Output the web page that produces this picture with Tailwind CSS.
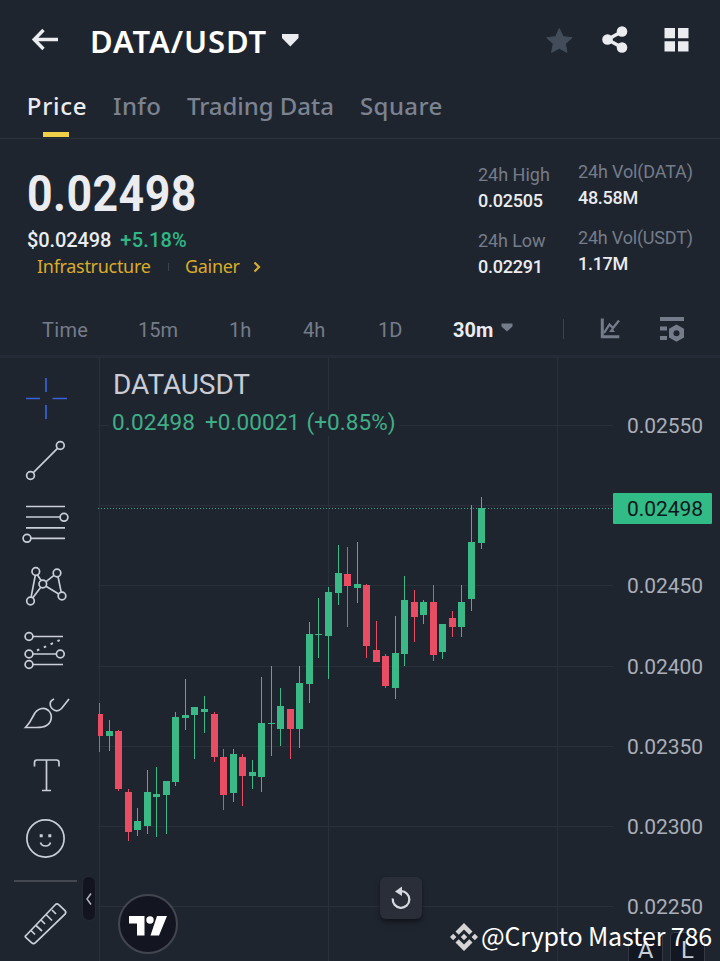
<!DOCTYPE html>
<html lang="en">

<head>
    <meta charset="UTF-8">
    <meta name="viewport" content="width=device-width, initial-scale=1.0">
    <title>DATA/USDT</title>
    <script src="https://cdn.jsdelivr.net/npm/@tailwindcss/browser@4"></script>
</head>

<body class="bg-[#1f252f] font-['Roboto',sans-serif]">
    <div class="relative flex flex-col w-[720px] h-[961px] overflow-hidden">
        <header class="flex items-center h-20 pl-[31px] pr-[30px]">
            <svg class="w-7 h-6" viewBox="31 28 28 24" fill="none" stroke="#eaecef" stroke-width="3.4">
                <path d="M58 39.500H34M43.500 30l-9.300 9.500 9.300 9.500" />
            </svg>
            <h1 class="ml-[31px] pt-[2px] w-[179px] text-[31px] leading-10 font-semibold tracking-[0.9px] text-white font-['Noto_Sans',sans-serif] whitespace-nowrap">DATA/USDT</h1>
            <svg class="ml-3 w-[18px] h-4" viewBox="281 32 18 16">
                <path d="M282 34h16.500v4l-8.200 8.500-8.300-8.500z" fill="#eaecef" />
            </svg>
            <div class="flex items-center gap-7 ml-auto">
                <svg class="w-7 h-7" viewBox="545 26 28 28">
                    <path d="M559.300 28.500l3.800 8.200 8.900 1-6.600 6.100 1.600 8.600-7.700-4.100-7.700 4.100 1.700-8.600-6.600-6.100 8.900-1z" fill="#434c5a" stroke="#434c5a" stroke-linejoin="round" />
                </svg>
                <svg class="w-7 h-7" viewBox="601 26 28 28" fill="#eaecef">
                    <path d="M622 31.500l-14.500 8 14.500 8" fill="none" stroke="#eaecef" stroke-width="3.500" />
                    <circle cx="622" cy="31.500" r="5.300" />
                    <circle cx="607.500" cy="39.500" r="5.300" />
                    <circle cx="622" cy="47.500" r="5.300" />
                </svg>
                <svg class="ml-[7px] w-[26px] h-7" viewBox="664 26 26 28" fill="#eaecef">
                    <path d="M664.500 28h10.500v10.300h-10.500zM678 28h10.500v10.300h-10.500zM664.500 41.300h10.500v10.300h-10.500zM678 41.300h10.500v10.300h-10.500z" />
                </svg>
            </div>
        </header>

        <nav class="flex h-[59px] pl-[27px] border-b border-[#2e343e] text-2xl leading-[52px] font-medium text-[#7b8290] font-['Noto_Sans',sans-serif] whitespace-nowrap">
            <div class="flex flex-col items-center w-[59px] mr-[27px] text-[#eaecef]">
                <span class="h-[52px] ml-px tracking-[0.7px]">Price</span>
                <span class="w-[26px] h-[5px] mr-[2px] bg-[#f0d048]"></span>
            </div>
            <span class="w-[74px] tracking-[0.4px]">Info</span>
            <span class="w-[173px] tracking-[-0.05px]">Trading Data</span>
            <span class="tracking-[0.4px]">Square</span>
        </nav>

        <section class="flex h-[162px] whitespace-nowrap">
            <div class="w-[451px] pl-[27px] pt-[24px]">
                <div class="text-[50px] leading-[62px] font-bold tracking-[0.5px] text-[#eaecef] origin-left scale-x-[0.893]">0.02498</div>
                <div class="flex gap-[9px] mt-0.5 text-xl leading-[26px] font-medium tracking-[-0.1px]">
                    <span class="text-[#eaecef]">$0.02498</span>
                    <span class="tracking-[0.2px] text-[#2fb785]">+5.18%</span>
                </div>
                <div class="flex items-center pl-2.5 text-lg leading-[27px] tracking-[-0.3px] text-[#d9ac2b] font-['Noto_Sans',sans-serif]">
                    <span class="w-[131px]">Infrastructure</span>
                    <span class="w-px h-2 mr-[16px] bg-[#3b424e]"></span>
                    <span class="w-[67px]">Gainer</span>
                    <svg class="w-[10px] h-3" viewBox="0 0 10 12" fill="none" stroke="#d9ac2b" stroke-width="2.200">
                        <path d="M2.500 1.500l4.500 4.500-4.500 4.500" />
                    </svg>
                </div>
            </div>
            <dl class="w-[73px] ml-[27px] pt-[23px] text-[#eaecef] text-lg leading-[26px] font-medium tracking-[-0.25px]">
                <dt class="text-[#757c89] font-normal tracking-normal">24h High</dt>
                <dd class="mb-[14px]">0.02505</dd>
                <dt class="text-[#757c89] font-normal tracking-[-0.1px]">24h Low</dt>
                <dd>0.02291</dd>
            </dl>
            <dl class="ml-[27px] pt-[20px] text-[#eaecef] text-lg leading-[26px] font-medium tracking-[-0.3px]">
                <dt class="text-[#757c89] font-normal tracking-[-0.15px]">24h Vol(DATA)</dt>
                <dd class="mb-[14px]">48.58M</dd>
                <dt class="text-[#757c89] font-normal tracking-[-0.2px]">24h Vol(USDT)</dt>
                <dd>1.17M</dd>
            </dl>
        </section>

        <div class="flex items-center h-[57px] pt-[3px] pl-[42px] border-b-[3px] border-[#262c37] text-xl text-[#757c89] whitespace-nowrap">
            <span class="w-[96px] tracking-[0.3px]">Time</span>
            <span class="w-[91px]">15m</span>
            <span class="w-[74px]">1h</span>
            <span class="w-[75px]">4h</span>
            <span class="w-[75px]">1D</span>
            <span class="w-[48px] text-[#eaecef] font-bold">30m</span>
            <svg class="w-3 h-[10px] mb-[3px]" viewBox="0 0 12 10"><path d="M0.500 0.500h11v3l-5.500 5-5.500-5z" fill="#757c89" /></svg>
            <span class="w-px h-5 ml-[50px] mb-[2px] bg-[#3b424e]"></span>
            <svg class="ml-[35px] mb-[2px] w-6 h-6" viewBox="599 317 24 24" fill="none" stroke="#757c89" stroke-width="3">
                <path d="M602.300 318.500v18.200h17" />
                <path d="M604 333l5.500-8.500 3.500 3.500 6-7.500" stroke-width="2.300" />
                <path d="M609 332l3-4 3 4z" fill="#757c89" stroke="none" />
            </svg>
            <svg class="ml-[36px] mb-[2px] w-[27px] h-[28px]" viewBox="659 315 27 28" fill="#757c89">
                <path d="M660 317h24v4h-24zM660 326.500h7v4h-7zM660 336h7v4h-7z" />
                <path d="M676.500 324.500l7.500 4.300v8.600l-7.500 4.300-7.500-4.300v-8.600z" />
                <circle cx="676.500" cy="333.300" r="3" fill="#1f252f" />
            </svg>
        </div>

        <main class="flex h-[603px]">
            <!-- drawing tools -->
            <aside class="relative w-[98px] pt-2 pl-[13px] shrink-0">
                <div class="flex flex-col w-16 [&>svg]:w-16 [&>svg]:h-[63px] [&>svg]:fill-none [&>svg]:stroke-[#c9ced8] [&>svg]:stroke-[1.700]">
                    <svg viewBox="13 366 64 63"><path d="M46 378v14M46 405v14M26 398.500h14M52.500 398.500h14.500" stroke="#3a62d6" /></svg>
                    <svg viewBox="13 429 64 63"><circle cx="30.500" cy="475.500" r="3.900" /><circle cx="60.300" cy="445.500" r="3.900" /><path d="M33.300 472.700l24.200-24.400" /></svg>
                    <svg viewBox="13 492 64 63"><path d="M26 506.500h39M26 517h34M26 527.800h39M31 538.300h34" /><circle cx="64" cy="517.300" r="3.900" /><circle cx="27" cy="538.300" r="3.900" /></svg>
                    <svg viewBox="13 555 64 63">
                        <circle cx="35.800" cy="571.500" r="3.800" /><circle cx="57" cy="573" r="3.800" /><circle cx="42.800" cy="584" r="3.800" /><circle cx="62" cy="596" r="3.800" /><circle cx="30.500" cy="601" r="3.800" />
                        <path d="M35.300 575.300l-4.200 21.800M37.500 575l3.600 5.500M46 581.700l8-6.300M58 576.700l3.200 15.500M46 586.200l12.700 7.800M40.800 587.300l-8 10.500" />
                    </svg>
                    <svg viewBox="13 618 64 63"><circle cx="29" cy="636.500" r="3.900" /><circle cx="29" cy="654" r="3.900" /><circle cx="60.300" cy="654" r="3.900" /><circle cx="29" cy="664.500" r="3.900" /><path d="M33 636.500h30M33 654h23.500M33 664.500h30" /><path d="M37 650.500l25-11.500" stroke-dasharray="2.500 5" stroke-width="2" /></svg>
                    <svg viewBox="13 681 64 63"><path d="M25.500 727.500c5-5 6.500-9 8.500-13 3-6 10-8 14.500-4 4.500 4.500 3.500 11.500-2 15-3 2-6 2-10 2zM54 699c-4.500 2-5 6-2 9.500 3 3 6.500 3 9.500 0l7.500-9.500" /></svg>
                    <svg viewBox="13 744 64 63"><path d="M34.500 766.500v-4q0-2.500 2.500-2.500h19.500q2.500 0 2.500 2.500v4M46.500 760v30.500M42 790.500h9" /></svg>
                    <svg viewBox="13 807 64 63"><circle cx="45.500" cy="838.500" r="18.600" /><path d="M40.500 842.500q1 3.500 5 3.500t5-3.500" /><path d="M39.700 835.800h3M48.300 835.800h3" stroke-width="3" /></svg>
                    <hr class="my-[10px] ml-px border-t-2 border-[#434851]">
                    <svg viewBox="13 892 64 63"><path d="M26 935.500l29-30.500q2-2 4 0l6 5.500q1.500 1.700 0 3.700l-29.500 28.500q-2 2-4 0l-5.500-5q-1.500-1.200 0-2.200zM31 930.500l4 4M36 925.500l6 5.500M41 920l4 4M46.500 915l5.500 5.500M52 910l4 4" /></svg>
                </div>
                <div class="absolute left-[82px] top-[518px] z-10 flex items-center justify-center w-[14px] h-[45px] rounded-[7px] bg-[#12151f] border border-[#242934]">
                    <svg class="w-2 h-3.5" viewBox="0 0 8 14" fill="none" stroke="#b2b5be" stroke-width="1.500"><path d="M6 1.500l-4 5.500 4 5.500" /></svg>
                </div>
            </aside>

            <svg id="chart" class="w-[622px] h-[603px] font-['Roboto',sans-serif]" viewBox="98 358 622 603">
                <path d="M99.500 358v603M328.500 358v603M557.500 358v603" stroke="#2a303a" />
                <path d="M98 425.500h515M98 505.500h515M98 585.500h515M98 666.500h515M98 746.500h515M98 826.500h515M98 906.500h515" stroke="#2a303a" />
                <rect x="109" y="410" width="290" height="26" fill="#1f252f" />
                <path d="M98 508.500h515" stroke="#3da585" stroke-dasharray="1 2" />
                <g id="candles"></g>
                <text x="113" y="394" font-size="28" fill="#c9ccd5" textLength="137">DATAUSDT</text>
                <g font-size="22.500" fill="#3fae87">
                    <text x="112" y="430" textLength="83">0.02498</text>
                    <text x="205" y="430" textLength="95">+0.00021</text>
                    <text x="306.500" y="430" textLength="89">(+0.85%)</text>
                </g>
                <rect x="613" y="493" width="99" height="31" rx="1" fill="#31bb86" />
                <g font-size="21" fill="#a9aeb8">
                    <text x="627" y="433" textLength="76">0.02550</text>
                    <text x="627" y="516" textLength="76" fill="#10151c">0.02498</text>
                    <text x="627" y="593" textLength="76">0.02450</text>
                    <text x="627" y="674" textLength="76">0.02400</text>
                    <text x="627" y="754" textLength="76">0.02350</text>
                    <text x="627" y="834" textLength="76">0.02300</text>
                    <text x="627" y="914" textLength="76">0.02250</text>
                </g>
            </svg>
        </main>

        <!-- chart overlays -->
        <div class="absolute left-[118px] top-[894px] flex items-center justify-center w-[60px] h-[60px] rounded-full bg-[#131620] border-2 border-[#43464f]">
            <svg class="w-[38px] h-5 mt-[3px]" viewBox="0 0 38 20" fill="#fff"><path d="M0 0h15.500v19.500H8V7.500H0zM28 0h10l-8 19.500h-8.500z" /><circle cx="21" cy="4" r="3.700" /></svg>
        </div>
        <div class="absolute left-[380px] top-[877px] flex items-center justify-center w-[42px] h-[42px] rounded-md bg-[#2a2e39] shadow-md shadow-black/40">
            <svg class="w-6 h-6" viewBox="389 886 24 24"><path d="M392.800 898.500a8.300 8.300 0 1 0 8.200-7.300h-3" fill="none" stroke="#d6d9e0" stroke-width="2.300" /><path d="M395 891.500l7-5v9.500z" fill="#d6d9e0" /></svg>
        </div>
        <div class="absolute left-[628px] top-[932px] flex gap-[7px] text-2xl leading-[34px] text-center text-[#c9ccd5]">
            <span class="w-[35px] h-10 rounded bg-[#131722] border border-[#343944]">A</span>
            <span class="w-[35px] h-10 rounded bg-[#131722] border border-[#343944]">L</span>
        </div>
        <div class="absolute left-[450px] top-[918px] flex items-center gap-[3px] text-white text-[25px] leading-[34px] tracking-[-0.12px] font-['Noto_Sans_CJK_SC',sans-serif] whitespace-nowrap">
            <svg class="mt-[4px] w-7 h-7" viewBox="0 0 28 28" fill="#d5d5d5">
                <path d="M14 0l8.500 8.500-3.200 3.200L14 6.400l-5.300 5.300-3.200-3.200zM14 28l8.500-8.500-3.200-3.200L14 21.600l-5.300-5.300-3.200 3.200zM3.200 10.800L6.400 14l-3.200 3.200L0 14zM24.800 10.800L28 14l-3.200 3.200-3.200-3.200zM14 10.800l3.200 3.200-3.200 3.200-3.200-3.200z" />
            </svg>
            <span>@Crypto Master 786</span>
        </div>
    </div>

    <script>
        // x, high, low, body top, body bottom, 1 = up
        const candles = [
            [99.5, 703, 752, 714, 736, 0], [109.5, 720, 751, 731, 736, 1], [118.5, 730, 791, 731, 789, 0],
            [128.5, 789, 841, 792, 832, 0], [137.5, 808, 836, 821, 830, 1], [147.5, 770, 834, 792, 826, 1],
            [156.5, 767, 837, 794, 797, 1], [166.5, 781, 834, 781, 795, 1], [175.5, 712, 786, 717, 782, 1],
            [185.5, 679, 730, 715, 718, 1], [194.5, 707, 759, 707, 715, 1], [204.5, 696, 733, 709, 712, 1],
            [214.5, 712, 762, 714, 757, 0], [223.5, 749, 810, 757, 795, 0], [233.5, 749, 802, 754, 793, 1],
            [242.5, 754, 806, 757, 776, 0], [252.5, 760, 789, 772, 776, 1], [261.5, 677, 792, 723, 777, 1],
            [271.5, 666, 756, 723, 724, 1], [280.5, 688, 746, 706, 729, 1], [290.5, 709, 759, 709, 729, 0],
            [299.5, 666, 748, 683, 729, 1], [309.5, 622, 703, 634, 684, 1], [318.5, 598, 658, 634, 635, 1],
            [328.5, 587, 679, 592, 636, 1], [338.5, 545, 605, 573, 593, 1], [347.5, 547, 627, 574, 586, 0],
            [357.5, 542, 603, 584, 588, 1], [366.5, 584, 658, 585, 646, 0], [376.5, 621, 662, 650, 662, 0],
            [385.5, 654, 688, 656, 686, 0], [395.5, 616, 699, 653, 688, 1], [404.5, 576, 666, 600, 654, 1],
            [414.5, 590, 642, 602, 617, 0], [423.5, 600, 624, 602, 615, 1], [433.5, 585, 661, 602, 655, 0],
            [442.5, 624, 659, 624, 652, 1], [452.5, 611, 637, 618, 627, 0], [461.5, 585, 637, 602, 627, 1],
            [471.5, 505, 611, 542, 599, 1], [481.5, 497, 549, 508, 543, 1]
        ];

        document.getElementById('candles').innerHTML = candles.map(([x, high, low, top, bottom, up]) => {
            const color = up ? '#3ab886' : '#e94d63';
            const left = Math.max(x - 3.5, 98);
            return `<path d="M${x} ${high}V${low}" stroke="${color}" />
                <rect x="${left}" y="${top}" width="${x + 3.5 - left}" height="${bottom - top}" fill="${color}" />`;
        }).join('');
    </script>
</body>

</html>
